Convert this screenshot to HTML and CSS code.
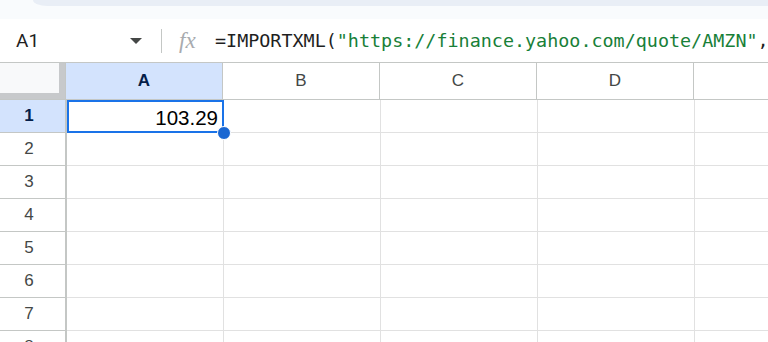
FILE: index.html
```html
<!DOCTYPE html>
<html>
<head>
<meta charset="utf-8">
<link rel="stylesheet" href="styles.css">
</head>
<body>
<div class="topbar"><div class="pill"></div></div>
<div class="formula-bar">
  <div class="name-box">A1</div>
  <div class="caret"></div>
  <div class="sep"></div>
  <div class="fx">fx</div>
  <div class="formula">=IMPORTXML(<span class="str">"https://finance.yahoo.com/quote/AMZN"</span>,<span class="str">"//fin-streamer[@data-field='regularMarketPrice']"</span>)</div>
</div>
<div class="grid">
  <div class="row head">
    <div class="corner"><div class="corner-in"></div></div>
    <div class="ch sel">A</div>
    <div class="ch">B</div>
    <div class="ch">C</div>
    <div class="ch">D</div>
    <div class="ch last"></div>
  </div>
  <div class="row">
    <div class="rh sel">1</div>
    <div class="cell active"><span class="val">103.29</span><div class="sel-box"></div><div class="handle"></div></div>
    <div class="cell"></div><div class="cell"></div><div class="cell"></div><div class="cell last"></div>
  </div>
  <div class="row"><div class="rh">2</div><div class="cell"></div><div class="cell"></div><div class="cell"></div><div class="cell"></div><div class="cell last"></div></div>
  <div class="row"><div class="rh">3</div><div class="cell"></div><div class="cell"></div><div class="cell"></div><div class="cell"></div><div class="cell last"></div></div>
  <div class="row"><div class="rh">4</div><div class="cell"></div><div class="cell"></div><div class="cell"></div><div class="cell"></div><div class="cell last"></div></div>
  <div class="row"><div class="rh">5</div><div class="cell"></div><div class="cell"></div><div class="cell"></div><div class="cell"></div><div class="cell last"></div></div>
  <div class="row"><div class="rh">6</div><div class="cell"></div><div class="cell"></div><div class="cell"></div><div class="cell"></div><div class="cell last"></div></div>
  <div class="row"><div class="rh">7</div><div class="cell"></div><div class="cell"></div><div class="cell"></div><div class="cell"></div><div class="cell last"></div></div>
  <div class="row"><div class="rh">8</div><div class="cell"></div><div class="cell"></div><div class="cell"></div><div class="cell"></div><div class="cell last"></div></div>
</div>
</body>
</html>
```
FILE: styles.css
```css
html, body {
  margin: 0;
  padding: 0;
  background: #ffffff;
  overflow: hidden;
  width: 768px;
  height: 342px;
}
body {
  font-family: "Liberation Sans", Arial, sans-serif;
}
.topbar {
  height: 19px;
  background: #f9fbfd;
}
.pill {
  margin-left: 33px;
  height: 6px;
  background: #e9eef6;
  border-bottom-left-radius: 24px 10px;
}
.formula-bar {
  height: 43px;
  display: flex;
  align-items: center;
  background: #ffffff;
  white-space: nowrap;
  overflow: hidden;
}
.formula-bar > div {
  flex: none;
}
.name-box {
  font-family: Roboto, "Noto Sans", sans-serif;
  font-size: 19px;
  color: #1f1f1f;
  margin-left: 16px;
  width: 114px;
}
.caret {
  width: 0;
  height: 0;
  border-left: 6px solid transparent;
  border-right: 6px solid transparent;
  border-top: 6px solid #444746;
  margin-top: 1px;
}
.sep {
  width: 1px;
  height: 24px;
  background: #c4c7c5;
  margin-left: 19px;
}
.fx {
  font-family: "Liberation Serif", "DejaVu Serif", serif;
  font-style: italic;
  font-size: 23px;
  color: #a8abaf;
  margin-left: 17px;
  width: 36px;
}
.formula {
  font-family: "DejaVu Sans Mono", "Liberation Mono", monospace;
  font-size: 18.4px;
  color: #1f1f1f;
}
.str {
  color: #188038;
}
.grid {
  border-top: 1px solid #c4c7c5;
}
.row {
  display: flex;
  height: 33px;
}
.row.head {
  height: 37px;
}
.corner {
  width: 66px;
  flex: none;
  background: #c7c9cb;
  border-bottom: 1px solid #c4c7c5;
  box-sizing: border-box;
  border-right: 1px solid #c4c7c5;
}
.corner-in {
  width: 59px;
  height: 30px;
  background: #f8f9fa;
}
.ch {
  width: 156px;
  flex: none;
  border-right: 1px solid #c4c7c5;
  border-bottom: 1px solid #c4c7c5;
  display: flex;
  align-items: center;
  justify-content: center;
  font-size: 17px;
  color: #444746;
  background: #ffffff;
}
.ch.sel {
  background: #d3e3fd;
  color: #041e49;
  font-weight: bold;
}
.ch.last, .cell.last {
  width: 80px;
  border-right: none;
}
.rh {
  box-sizing: border-box;
  width: 67px;
  padding-right: 7px;
  flex: none;
  border-right: 2px solid #c4c7c5;
  border-bottom: 1px solid #c4c7c5;
  display: flex;
  align-items: center;
  justify-content: center;
  font-size: 17px;
  color: #444746;
}
.rh.sel {
  background: #d3e3fd;
  color: #041e49;
  font-weight: bold;
}
.cell {
  width: 156px;
  flex: none;
  border-right: 1px solid #e1e1e1;
  border-bottom: 1px solid #e1e1e1;
  position: relative;
  display: flex;
  align-items: center;
  justify-content: flex-end;
}
.val {
  font-size: 20.5px;
  color: #000000;
  padding-right: 5px;
  padding-top: 3px;
}
.sel-box {
  position: absolute;
  left: 0;
  top: 0;
  right: -1px;
  bottom: -1px;
  border: 2px solid #1a73e8;
}
.handle {
  position: absolute;
  right: -8px;
  bottom: -8px;
  width: 12px;
  height: 12px;
  border-radius: 50%;
  background: #1a67d2;
  border: 1px solid #ffffff;
  z-index: 2;
}
```
